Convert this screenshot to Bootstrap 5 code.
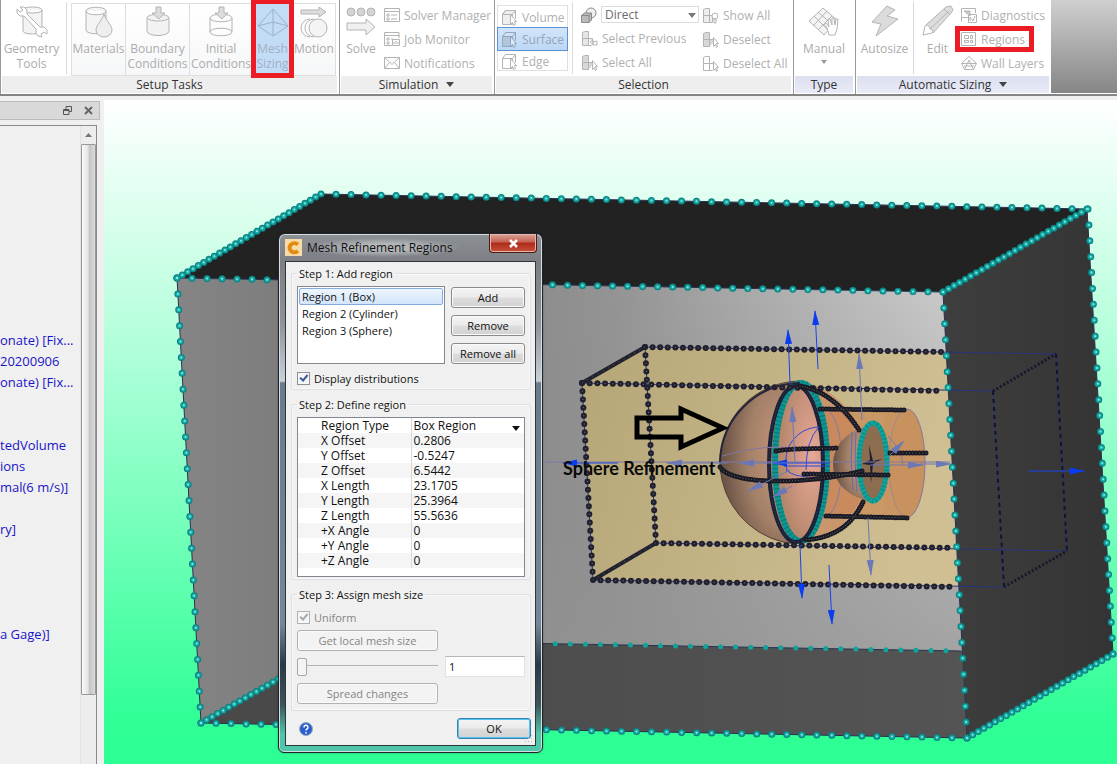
<!DOCTYPE html>
<html lang="en">
<head>
<meta charset="utf-8">
<meta name="viewport" content="width=device-width, initial-scale=1">
<title>Mesh Refinement Regions</title>
<link href="https://cdn.jsdelivr.net/npm/bootstrap@5.3.0/dist/css/bootstrap.min.css" rel="stylesheet">
<style>
  body { font-family: "Open Sans", "Noto Sans", sans-serif; font-size: 12px; line-height: 15px; background: #f0f0f0; color: #222; }
  button, select, input { font: inherit; color: inherit; }
  svg { display: block; flex: none; }
  .ico { fill: none; stroke: #b4b4b4; stroke-width: 1; }

  /* ribbon */
  .ribbon { border-bottom: 2px solid #858585; height: 96px; background: #fff; overflow: hidden; }
  .rgroup { border-left: 1px solid #9a9a9a; border-right: 1px solid #fff; flex: none; }
  .rbody { height: 76px; }
  .rlabel { height: 17px; line-height: 18px; background: #eeeeee; margin: 0 1px 1px; color: #333; }
  .rlabel.active-tab { background: linear-gradient(#dcdff0, #e9ebf7); }
  .rlabel .caret-sm { border: 4px solid transparent; border-top: 5px solid #444; border-bottom: 0; }
  .big { border: 0; background: none; padding: 4px 0 0; color: #acacac; display: flex; flex-direction: column; align-items: center; flex: none; white-space: nowrap; }
  .big svg { margin-bottom: 3px; }
  .tasks { border: 1px solid #dedede; background: linear-gradient(#fff, #f6f7f8); height: 73px; margin: 3px 0 0 4px; }
  .tasks .big { padding-top: 2px; }
  .tasks .big + .big { border-left: 1px solid #dedede; }
  .tasks .chosen { background: #c3dcf6; color: #9fb0c4; overflow: visible; position: relative; }
  .tasks .chosen .ico { stroke: #9db0c6; }
  .redbox { position: absolute; border: 5px solid #ec1c24; pointer-events: none; }
  .redbox.tall { inset: -5px -2px -3px -2px; }
  .redbox.wide { inset: -1px -9px -1px -6px; }
  .rule { width: 1px; background: #dadada; margin: 2px 0; flex: none; }
  .cmds { padding-top: 3px; }
  .cmd { border: 0; background: none; padding: 0; height: 24px; color: #b0b0b0; display: flex; align-items: center; gap: 4px; white-space: nowrap; position: relative; }
  .modes { border: 1px solid #e0e0e0; width: 71px; margin: 5px 0 0 2px; height: 66px; }
  .modes .cmd { height: 22px; width: 100%; padding-left: 3px; gap: 4px; }
  .modes .on { outline: 1px solid #5b94d6; background: linear-gradient(#d2e5f9, #bcd8f5); color: #93a5ba; }
  .pick { width: 99px; height: 17px; border: 1px solid #dcdcdc; background: #fff; color: #6c6c6c; padding: 0 3px; appearance: none; line-height: 15px; }
  .pickwrap { height: 23px; width: 118px; }
  .pickwrap::after, .typewrap::after { content: ""; position: absolute; right: 3px; top: 10px; border: 4px solid transparent; border-top: 5px solid #777; border-bottom: 0; pointer-events: none; }
  .ribbon-rest { background: linear-gradient(#cfcfcf, #868686); margin-bottom: 1px; }

  /* tree */
  .side { width: 104px; padding-top: 5px; }
  .side-head { height: 19px; margin-right: 4px; background: #d9d9d9; border: 1px solid #bcbcbc; border-left: 0; padding-right: 6px; gap: 12px; }
  .tree { margin: 5px 7px 0 0; border-top: 1px solid #8a8a8a; border-right: 1px solid #8a8a8a; }
  .tree ul { font-size: 13px; line-height: 21px; padding-top: 204px; width: 80px; }
  .tree a { color: #1a14c8; text-decoration: none; white-space: nowrap; display: block; height: 21px; }
  .gap-2rows { margin-top: 42px; } .gap-1row { margin-top: 21px; } .gap-4rows { margin-top: 84px; }
  .sbar { width: 16px; background: #ededed; border-left: 1px solid #e2e2e2; }
  .thumb { height: 551px; border: 1px solid #999; border-radius: 1px; background: linear-gradient(90deg, #fafafa, #e4e4e4 45%, #c4c4c8 60%, #dcdcdc); }

  /* scene */
  .scene { background: linear-gradient(#fff, #9cffd0 47%, #30ff96 93%, #2cff94); overflow: hidden; }
  .beads use, .beads path { fill: none; stroke-linecap: round; stroke-dasharray: 0 1; }
  .note { font: bold 18px Lato, "Open Sans", sans-serif; fill: #0a0a0a; }

  /* dialog */
  .dlg { left: 174px; top: 133px; width: 265px; border: 1px solid #20252a; border-radius: 7px 7px 6px 6px; padding: 0 6px 6px; font-size: 11px; line-height: 15px; color: #111;
    background: linear-gradient(#8d9195 0, #7b7f84 28px, #8e9499 90px, #c9d1d9 147px, #6a7b8d 149px, #75869a 390px, #2a3a48 430px, #3a5358 470px, #4fc6a8 500px); box-shadow: inset 0 0 0 1px #d5dde2, 0 0 2px #0006; }
  .dlg-title { height: 27px; font-size: 12px; }
  .dlg-title .glow { background: radial-gradient(closest-side, #b4b7ba 40%, #b4b7ba00); padding: 2px 8px 2px 1px; }
  .xbtn { position: absolute; right: 5px; top: 0; width: 48px; height: 19px; border: 1px solid #4a1a16; border-top: 0; border-radius: 0 0 4px 4px; padding: 0; background: linear-gradient(#dba59c, #c6604f 45%, #ac2b1a 50%, #c9503a); box-shadow: inset 0 0 0 1px #e9b5ac; }
  .client { background: #f0f0f0; border: 1px solid #2f363c; padding: 4px 4px 6px 5px; position: relative; }
  .client fieldset { border: 1px solid #dcdfe2; border-radius: 3px; padding: 0 5px; min-width: 0; box-shadow: inset 0 0 0 1px #f9f9f9; margin-bottom: 7px; }
  .client legend { float: none; width: auto; font-size: 11px; line-height: 15px; padding: 0 2px; margin: 0 0 5px; }
  .regions { width: 148px; height: 78px; border: 1px solid #828790; background: #fff; padding: 1px; }
  .regions .list-group-item { border: 1px solid transparent; padding: 0 2px; height: 17px; line-height: 15px; background: none; color: #111; border-radius: 2px; text-align: left; }
  .regions .picked { border-color: #84acdd; background: linear-gradient(#eef5fd, #d3e5fb); }
  .acts { width: 74px; gap: 7px; padding-top: 1px; }
  .wbtn { border: 1px solid #8a8a8a; border-radius: 3px; padding: 0; height: 21px; line-height: 17px; background: linear-gradient(#f4f4f4, #ebebeb 48%, #dddddd 52%, #d2d2d2); box-shadow: inset 0 0 0 1px #fafafa; color: #111; }
  .wbtn:disabled { background: #f3f3f3; border-color: #b0b3b5; color: #858585; }
  .wbtn.ok { border-color: #3c7fb1; box-shadow: inset 0 0 0 1px #54c5ee; width: 74px; }
  .wbtn.wide { width: 141px; display: block; }
  .tick { appearance: none; width: 13px; height: 13px; border: 1px solid #8e8f8f; margin: 0; background: #f4f6f8; flex: none; display: grid; place-items: center; }
  .tick::before { content: ""; width: 8px; height: 5px; border: solid #3c5a94; border-width: 0 0 2px 2px; transform: rotate(-50deg) translate(1px, -1px); }
  .tick:disabled { border-color: #b1b1b1; } .tick:disabled::before { border-color: #aaa; }
  .props { border: 1px solid #828790; background: #fff; height: 160px; }
  .props table { width: 100%; font-size: 12px; border-collapse: collapse; table-layout: fixed; }
  .props tr { height: 15px; } .props tr:nth-child(even) { background: #f5f5f5; }
  .props th { font-weight: 400; width: 113px; padding: 0 0 0 23px; border-right: 1px solid #d8d8d8; }
  .props td { padding: 0 0 0 2px; }
  .props select { appearance: none; border: 0; background: none; padding: 0; width: 100%; height: 15px; display: block; line-height: 15px; }
  .typewrap::after { top: 8px; right: 4px; border-top-color: #111; }
  .slide { appearance: none; width: 141px; height: 19px; background: linear-gradient(#b4b4b4, #b4b4b4) 0 8px / 100% 1px no-repeat; margin: 0; }
  .slide::-webkit-slider-thumb { appearance: none; width: 10px; height: 18px; border: 1px solid #a4a6a8; border-radius: 2px; background: #f4f4f4; }
  .num { width: 80px; height: 21px; border: 1px solid #e0e3e6; border-top-color: #b5b8bb; background: #fff; padding: 0 3px; }
  .help { border: 0; background: none; padding: 0; }
  .grip { position: absolute; right: 1px; bottom: 1px; }
</style>
</head>
<body class="d-flex flex-column min-vh-100 overflow-hidden">

<header class="ribbon d-flex">
  <section class="rgroup" style="width:339px">
    <div class="rbody d-flex">
      <button class="big" style="width:61px">
        <svg class="ico" width="32" height="34" viewBox="0 0 32 34"><path fill="#f4f4f4" d="M7 6v21c0 4 19 4 19 0V6M7 6c0-4 19-4 19 0s-19 4-19 0"/><path fill="#fff" d="M4 3l4 0 3 3v4l13 13 4 0 3 3v4l-3-2-3 2 1 3-4-1-2-3 0-4L8 12 4 12 1 9V5l3 3 3-2z"/></svg>
        Geometry<br>Tools</button>
      <div class="rule ms-1"></div>
      <div class="tasks d-flex">
        <button class="big" style="width:53px">
          <svg class="ico" width="32" height="32" viewBox="0 0 32 32"><path fill="#f4f4f4" d="M3 5v19c0 5 20 5 20 0V5M3 5c0-5 20-5 20 0s-20 5-20 0"/><path fill="#eee" d="M21 8c2 7 8 11 8 16a8 7 0 0 1-16 0c0-5 6-9 8-16z"/></svg>Materials</button>
        <button class="big" style="width:64px">
          <svg class="ico" width="32" height="32" viewBox="0 0 32 32"><path fill="#f2f2f2" d="M5 12v13c0 6 22 6 22 0V12c0-5-22-5-22 0 3 4 19 4 22 0"/><path fill="#ddd" d="M14 1h5v6h4l-6 6-7-6h4z"/></svg>Boundary<br>Conditions</button>
        <button class="big" style="width:63px">
          <svg class="ico" width="32" height="32" viewBox="0 0 32 32"><path d="M5 12v14c0 5 22 5 22 0V12M5 12c0-5 22-5 22 0s-22 5-22 0M5 26c0-5 22-5 22 0"/><path fill="#ddd" d="M14 1h5v6h4l-6 6-7-6h4z"/></svg>Initial<br>Conditions</button>
        <button class="big chosen" style="width:40px">
          <svg class="ico" width="32" height="32" viewBox="0 0 32 32"><path d="M16 3L1 20l15 10 15-10zM16 3v27M1 20l15-4 15 4"/></svg>Mesh<br>Sizing<span class="redbox tall"></span></button>
        <button class="big" style="width:43px">
          <svg class="ico" width="32" height="32" viewBox="0 0 32 32"><path fill="#ddd" d="M3 4h18V1l7 5-7 5V8H3z"/><path d="M12 13a9 9 0 0 0 0 18M16 13a9 9 0 0 0 0 18"/><circle cx="20" cy="22" r="9" fill="#f4f4f4"/></svg>Motion</button>
      </div>
    </div>
    <div class="rlabel text-center">Setup Tasks</div>
  </section>

  <section class="rgroup" style="width:155px">
    <div class="rbody d-flex">
      <button class="big" style="width:42px">
        <svg class="ico" width="32" height="34" viewBox="0 0 32 34"><g fill="#d4d4d4"><circle cx="6" cy="8" r="4"/><circle cx="16" cy="8" r="4"/><circle cx="26" cy="8" r="4"/></g><path fill="#f0f0f0" d="M2 19h19v-4l9 8-9 8v-5H2z"/></svg>Solve</button>
      <div class="cmds" style="padding-left:2px">
        <button class="cmd"><svg class="ico" width="16" height="16"><path d="M.5 1.500h15v13H.5zM.5 4.500h15M3 7h2v2H3zM3 11h2v2H3zM7 8h6M7 12h6"/></svg>Solver Manager</button>
        <button class="cmd"><svg class="ico" width="16" height="16"><path d="M15 7V1.500H.5v13H8M.5 4.500h15M3 7h2v2H3zM3 11h2v2H3zM7 8h2M8.500 8.500h7v6h-7zM10 13v-2M12 13v-3M14 13v-2"/></svg>Job Monitor</button>
        <button class="cmd"><svg class="ico" width="16" height="16"><path d="M.5 2.500h15v11H.5zl7.500 7 7.500-7M.5 13.500l5-6M15.500 13.500l-5-6"/></svg>Notifications</button>
      </div>
    </div>
    <div class="rlabel d-flex justify-content-center align-items-center gap-2">Simulation <span class="caret-sm"></span></div>
  </section>

  <section class="rgroup" style="width:299px">
    <div class="rbody d-flex">
      <div class="modes">
        <button class="cmd"><svg class="ico" width="17" height="17"><path fill="#eee" d="M1.500 5.500h10v10h-10zl3-4h10l-3 4M14.500 1.500v8M1.500 5.500l3-4"/><path fill="#fff" d="M9.500 5.500v10l2-2 1 3 2-1-1-3h2z"/></svg>Volume</button>
        <button class="cmd on"><svg class="ico" width="17" height="17" style="stroke:#8fa6c0"><path fill="#b5c5d8" d="M1.500 5.500h10v10h-10z"/><path d="M1.500 5.500l3-4h10l-3 4M14.500 1.500v8"/><path fill="#dbe9f8" d="M9.500 5.500v10l2-2 1 3 2-1-1-3h2z"/></svg>Surface</button>
        <button class="cmd"><svg class="ico" width="17" height="17"><path d="M1.500 5.500h10v10h-10zl3-4h10l-3 4M14.500 1.500v8"/><path fill="#fff" d="M9.500 5.500v10l2-2 1 3 2-1-1-3h2z"/></svg>Edge</button>
      </div>
      <div class="rule ms-1"></div>
      <div class="ps-2 cmds" style="width:125px">
        <div class="d-flex pickwrap position-relative align-items-center gap-1"><svg class="ico" width="16" height="16" style="stroke:#8a8a8a"><circle cx="10" cy="6" r="5" fill="#eee"/><path fill="#bbb" d="M.5 8.500l3-2.500h7v7l-2.500 2.500H.5z"/><path d="M.5 8.500H8v7M8 8.500L10.500 6"/></svg>
          <select class="pick flex-fill" aria-label="Selection mode"><option>Direct</option></select></div>
        <button class="cmd"><svg class="ico" width="17" height="17"><path fill="#e6e6e6" d="M1.500 15.500v-13l2-1h4v14zM1.500 8.500h6M7.500 8.500h4v3M7.500 15.500h3"/><path d="M9 12l3-2v5zM12 12l4-1v4h-4z"/></svg>Select Previous</button>
        <button class="cmd"><svg class="ico" width="17" height="17"><path fill="#d8d8d8" d="M1.500 15.500v-13l2-1h4v14zM1.500 8.500h6M7.500 15.500v-7h4v3"/><path fill="#fff" d="M11.500 6.500v9l2-2 1 3 1-1-1-3h2z"/></svg>Select All</button>
      </div>
      <div class="ps-1 cmds">
        <button class="cmd"><svg class="ico" width="17" height="17"><path fill="#eee" d="M1.500 15.500v-13l2-1h4v14zM1.500 8.500h6M7.500 15.500h3v-7h-3"/><circle cx="13" cy="9" r="3" fill="#fff"/><path fill="#fff" d="M12 12h2v4h-2z"/></svg>Show All</button>
        <button class="cmd"><svg class="ico" width="17" height="17"><path fill="#d8d8d8" d="M1.500 15.500v-13l2-1h4v14zM1.500 8.500h6M7.500 15.500v-7h4v3"/><path fill="#fff" d="M11.500 6.500v9l2-2 1 3 1-1-1-3h2z"/></svg>Deselect</button>
        <button class="cmd"><svg class="ico" width="17" height="17"><path d="M1.500 15.500v-13l2-1h4v14zM1.500 8.500h6M7.500 15.500h3M7.500 8.500h4v3"/><path fill="#fff" d="M11.500 6.500v9l2-2 1 3 1-1-1-3h2z"/></svg>Deselect All</button>
      </div>
    </div>
    <div class="rlabel text-center">Selection</div>
  </section>

  <section class="rgroup" style="width:62px">
    <div class="rbody d-flex">
      <button class="big" style="width:60px">
        <svg class="ico" width="34" height="34" viewBox="0 0 34 34"><path fill="#f4f4f4" d="M2 17L16 4l14 12-13 15zM7 12l14 14M6 22L20 7"/><path d="M11 8l15 13M11 26L25 12"/><path fill="#fff" d="M20 24l-3-4 2-1 3 4-1-8h2l2 6v-7h2l1 7 1-6h2l-1 10-2 6h-6z"/></svg>Manual<span class="mt-1" style="border:3px solid transparent;border-top:4px solid #999;border-bottom:0"></span></button>
    </div>
    <div class="rlabel active-tab text-center">Type</div>
  </section>

  <section class="rgroup" style="width:196px">
    <div class="rbody d-flex">
      <button class="big" style="width:57px">
        <svg class="ico" width="32" height="34" viewBox="0 0 32 34"><path fill="#dcdcdc" d="M18 2L3 18l9 2-5 12 22-17-11-3 8-6z"/></svg>Autosize</button>
      <div class="rule"></div>
      <button class="big" style="width:47px">
        <svg class="ico" width="32" height="34" viewBox="0 0 32 34"><path fill="#fff" d="M1 31l2-9 4-4 7 7-4 4z"/><path fill="#ddd" d="M4 21L24 3l5-1 2 4-2 3L11 29c0-3-1-4-3-4 0-3-2-4-4-4zM8 25L27 7M22 5l6 6"/></svg>Edit</button>
      <div class="cmds">
        <button class="cmd"><svg class="ico" width="16" height="16"><path d="M.5 14.500v-13h14V6M.5 10.500h7M7.500 7.500h8v8h-8zM9 14v-4l3 4 2-5"/><path fill="#ccc" d="M3 4h6v5z"/></svg>Diagnostics</button>
        <button class="cmd"><svg class="ico" width="16" height="16"><path d="M.5 1.500h14v13H.5zM3.500 4.500h4v3h-4zM9.500 4.500h2v3h-2zM3.500 9.500h4v2h-4zM9.500 9.500h2v2h-2z"/></svg>Regions<span class="redbox wide"></span></button>
        <button class="cmd"><svg class="ico" width="16" height="16"><path d="M8 1.500L.5 8.500l3 6h9l3-6zM8 5l-4.500 9.500M8 5l4.500 9.500M.5 8.500h15M3 11h10"/></svg>Wall Layers</button>
      </div>
    </div>
    <div class="rlabel active-tab d-flex justify-content-center align-items-center gap-2">Automatic Sizing <span class="caret-sm"></span></div>
  </section>
  <div class="ribbon-rest flex-fill"></div>
</header>

<main class="d-flex flex-fill">
  <aside class="side d-flex flex-column flex-shrink-0">
    <div class="side-head d-flex justify-content-end align-items-center">
      <svg width="9" height="9" fill="none" stroke="#555"><path d="M3 3V.5h5.500v5H6M.5 3.500H6v5H.5zM.5 4.500H6"/></svg>
      <svg width="9" height="9" stroke="#666" stroke-width="2"><path d="M1 1l7 7M8 1L1 8"/></svg>
    </div>
    <div class="tree d-flex flex-fill">
      <ul class="list-unstyled m-0">
        <li><a href="#">onate) [Fix...</a></li>
        <li><a href="#">20200906</a></li>
        <li><a href="#">onate) [Fix...</a></li>
        <li class="gap-2rows"><a href="#">tedVolume</a></li>
        <li><a href="#">ions</a></li>
        <li><a href="#">mal(6 m/s)]</a></li>
        <li class="gap-1row"><a href="#">ry]</a></li>
        <li class="gap-4rows"><a href="#">a Gage)]</a></li>
      </ul>
      <div class="sbar">
        <svg width="15" height="18"><path d="M4 11l3.500-4 3.500 4z" fill="#777"/></svg>
        <div class="thumb"></div>
      </div>
    </div>
  </aside>

  <section class="scene flex-fill position-relative mt-1">
    <svg class="w-100 h-100 position-absolute" viewBox="104 100 1013 664" preserveAspectRatio="xMinYMin slice" role="img" aria-label="Mesh model">
      <defs>
        <linearGradient id="wall"><stop offset="0" stop-color="#7c7c7c"/><stop offset=".45" stop-color="#949494"/><stop offset="1" stop-color="#cdcdcd"/></linearGradient>
        <linearGradient id="shade" x2="0" y2="1"><stop offset="0" stop-color="#888" stop-opacity="0"/><stop offset="1" stop-color="#929292" stop-opacity=".7"/></linearGradient>
        <linearGradient id="floor"><stop offset="0" stop-color="#484848"/><stop offset="1" stop-color="#545454"/></linearGradient>
        <linearGradient id="tan" x2="1" y2=".2"><stop offset="0" stop-color="#b5a678"/><stop offset="1" stop-color="#cfbf92"/></linearGradient>
        <linearGradient id="lwall"><stop offset="0" stop-color="#858585"/><stop offset="1" stop-color="#787878"/></linearGradient>
        <linearGradient id="rwall"><stop offset="0" stop-color="#3e3e3e"/><stop offset="1" stop-color="#343434"/></linearGradient>
        <radialGradient id="ball" cx=".8" cy=".45" r=".75"><stop offset="0" stop-color="#c99a7e"/><stop offset=".6" stop-color="#a38068"/><stop offset="1" stop-color="#6e5648"/></radialGradient>
        <radialGradient id="inner" cx=".75" cy=".45" r=".6"><stop offset="0" stop-color="#e8a898"/><stop offset="1" stop-color="#b4866a"/></radialGradient>
        <marker id="tip" markerWidth="16" markerHeight="8" refX="14" refY="3.500" orient="auto" markerUnits="userSpaceOnUse"><path d="M0 0L15 3.500 0 7z" fill="#0a3cf0"/></marker>
        <marker id="tipDim" markerWidth="18" markerHeight="8" refX="15" refY="3.500" orient="auto" markerUnits="userSpaceOnUse"><path d="M0 0L16 3.500 0 7z" fill="#6a78b8"/></marker>
        <g id="outer">
          <path pathLength="51" d="M321 194L1087 209"/><path pathLength="51" d="M177 278L943 292"/><path pathLength="28" d="M177 278L201 723"/>
          <path pathLength="27" d="M177 278L321 194"/><path pathLength="26" d="M943 292L1087 209"/><path pathLength="28" d="M943 292L967 738"/>
          <path pathLength="28" d="M1088 209L1113 654"/><path pathLength="51" d="M201 723L967 738"/><path pathLength="26" d="M967 738L1113 654"/>
          <path pathLength="26" d="M201 723L345 641"/>
        </g>
        <path id="floorEdge" pathLength="41" d="M345 640L961 651"/>
        <g id="region">
          <path pathLength="39" d="M645 347L941 352"/><path pathLength="47" d="M582 383L944 391"/><path pathLength="39" d="M656 543L955 548"/><path pathLength="48" d="M593 580L957 587"/>
          <path pathLength="24" d="M582 383L593 580"/><path pathLength="24" d="M645 347L656 543"/>
        </g>
        <g id="cyl">
          <path pathLength="28" d="M820 409L904 410"/><path pathLength="18" d="M776 451C795 448 815 449 836 448"/><path pathLength="11" d="M890 453L926 453"/><path pathLength="26" d="M804 474L888 475"/><path pathLength="28" d="M826 516L910 518"/>
          <path pathLength="30" d="M800 386Q834 392 859 430"/><path pathLength="30" d="M863 502Q846 538 804 540"/>
          <path pathLength="50" d="M720 467C730 484 800 486 862 471"/>
        </g>
      </defs>
      <path fill="#222" d="M177 278L321 194 1087 209 943 292z"/>
      <path fill="url(#wall)" d="M330 281L943 292 962 651 345 640z"/>
      <path fill="url(#shade)" d="M330 281L943 292 962 651 345 640z"/>
      <path fill="url(#lwall)" d="M177 278L330 281 345 641 201 723z"/>
      <path fill="url(#floor)" d="M345 640L962 651 967 738 201 723z"/>
      <path fill="url(#rwall)" d="M943 292L1087 209 1113 654 967 738z"/>
      <path fill="url(#tan)" d="M582 383L645 347 946 352 958 587 593 580z"/>
      <path fill="none" stroke="#28347c" d="M645 347L1056 354M582 383L993 391M656 543L1067 551M593 580L1004 587M582 383L593 580M645 347L656 543M993 391L1004 587M1056 354L1067 551"/>
      <path fill="none" stroke="#12152a" stroke-width="2" stroke-dasharray="4 4" d="M993 391L1004 587M1056 354L1067 551"/>
      <path fill="none" stroke="#15182c" stroke-width="3" stroke-dasharray="2 2" d="M993 391L1056 354M1004 587L1067 551"/>
      <path fill="none" stroke="#2a3050" d="M177 278L943 292 1087 209 321 194zL201 723 967 738 1113 654 1087 209M943 292L967 738M201 723L345 640 961 651"/>

      <!-- cylinder and spheres -->
      <path fill="#c8864f" fill-opacity=".65" d="M820 409H907a18 54 0 0 1 0 109L826 517z"/>
      <path fill="#c98058" fill-opacity=".6" d="M800 381A82 82 0 0 1 858 425 50 50 0 0 0 860 500Q840 540 796 544z"/>
      <ellipse cx="824" cy="463" rx="18" ry="54" fill="none" stroke="#8478a8"/>
      <ellipse cx="907" cy="463" rx="18" ry="54" fill="#c8925f" stroke="#8478a8"/>
      <path fill="#c8925f" d="M884 411h23v106h-23z" opacity=".5"/>
      <path fill="url(#ball)" stroke="#54402f" d="M800 381A81 81 0 0 0 722 480 82 82 0 0 0 796 544C760 510 764 410 800 381z"/>
      <ellipse cx="798" cy="463" rx="27" ry="80" fill="url(#inner)"/>
      <ellipse cx="801" cy="462" rx="26" ry="79" fill="none" stroke="#0e9590" stroke-width="6"/>
      <ellipse cx="801" cy="462" rx="26" ry="79" fill="none" stroke="#0a7578" stroke-width="6" stroke-dasharray="1 3"/>
      <ellipse cx="796" cy="464" rx="27" ry="78" fill="none" stroke="#1a2038" stroke-width="4"/>
      <ellipse cx="796" cy="464" rx="27" ry="78" fill="none" stroke="#3d4460" stroke-dasharray="1 2"/>
      <path fill="url(#ball)" d="M873 425C850 428 833 444 833 464S850 498 873 502z"/>
      <ellipse cx="873" cy="462" rx="14" ry="39" fill="#8c6d50" stroke="#0fa39b" stroke-width="5"/>
      <ellipse cx="873" cy="462" rx="14" ry="39" fill="none" stroke="#0c8583" stroke-dasharray="1 3" stroke-width="5"/>
      <path d="M869 445l1 15-8 4 8 1 1 18 2-19 9-5-9 2z" fill="#1c2034"/>
      <path fill="none" stroke="#2f48d8" d="M819 427A34 34 0 0 0 787 470M819 427Q806 440 806 470M784 466H830M786 470Q796 478 810 476"/>
      <path fill="none" stroke="#6a68b0" d="M852 432Q850 460 853 490M856 432Q854 460 857 492"/>
      <path fill="none" stroke="#8076a4" d="M722 456Q770 442 800 450M888 436Q902 450 903 465M545 462H950"/>

      <g class="beads">
        <use href="#region" stroke="#202030" stroke-width="6"/><use href="#region" stroke="#8f8a78" stroke-width="1"/>
        <use href="#cyl" stroke="#191925" stroke-width="5"/><use href="#cyl" stroke="#77756c" stroke-width="1"/>
      </g>
      <path d="M582 383L645 347M593 580L656 543" stroke="#20222e" stroke-width="4" stroke-linecap="round"/>
      <path d="M582 383L645 347M593 580L656 543" stroke="#55576a" stroke-dasharray="1 5"/>
      <path fill="none" stroke="#24243a" stroke-width="2" d="M800 383A81 81 0 0 0 720 462"/>

      <g class="beads">
        <use href="#floorEdge" stroke="#12a49c" stroke-width="5"/>
        <use href="#outer" stroke="#0b7f7f" stroke-width="7"/><use href="#outer" stroke="#18aaa6" stroke-width="5"/><use href="#outer" stroke="#7ff0e4" stroke-width="2"/>
      </g>

      <g fill="none" stroke="#1a44e8" marker-end="url(#tip)"><path d="M818 369L815 311"/><path d="M829 565L832 624"/><path d="M790 384L788 330"/><path d="M800 545L802 598"/><path d="M1028 471H1084"/><path d="M618 463H563"/><path d="M830 463H773"/></g>
      <g fill="none" stroke="#6a78b8" marker-end="url(#tipDim)"><path d="M862 420L859 354"/><path d="M868 518L871 575"/><path d="M728 463H667"/><path d="M795 463H739"/><path d="M795 463L792 407"/><path d="M870 465H923"/><path d="M920 464H951"/><path d="M890 455L904 441"/><path d="M790 470L748 491"/><path d="M792 486L773 497"/></g>

      <path fill="none" stroke="#000" stroke-width="5" d="M637 418H681V409L723 428 681 447V437H637z"/>
      <text class="note" x="563" y="475">Sphere Refinement</text>
    </svg>

    <div class="dlg position-absolute" role="dialog" aria-label="Mesh Refinement Regions">
      <div class="dlg-title d-flex align-items-center gap-1">
        <svg width="17" height="17"><path fill="#f7dca8" d="M0 0h17v17H0z"/><path d="M13 5.500A5 4.500 0 1 0 13 12" fill="none" stroke="#e58a10" stroke-width="4"/></svg>
        <span class="glow">Mesh Refinement Regions</span>
        <button class="xbtn" aria-label="Close"><svg class="m-auto" width="11" height="9"><path d="M2 1l7 7M9 1L2 8" stroke="#fff" stroke-width="2.500"/></svg></button>
      </div>
      <div class="client">
        <fieldset style="height:124px"><legend>Step 1: Add region</legend>
          <div class="d-flex justify-content-between">
            <div class="regions list-group rounded-0">
              <button class="list-group-item picked">Region 1 (Box)</button><button class="list-group-item">Region 2 (Cylinder)</button><button class="list-group-item">Region 3 (Sphere)</button>
            </div>
            <div class="acts d-flex flex-column"><button class="wbtn">Add</button><button class="wbtn">Remove</button><button class="wbtn">Remove all</button></div>
          </div>
          <label class="d-flex align-items-center gap-1" style="margin-top:7px"><input class="tick" type="checkbox" checked>Display distributions</label>
        </fieldset>
        <fieldset style="height:183px"><legend>Step 2: Define region</legend>
          <div class="props"><table>
            <tr><th scope="row">Region Type</th><td><div class="typewrap position-relative"><select aria-label="Region Type"><option>Box Region</option></select></div></td></tr>
            <tr><th scope="row">X Offset</th><td>0.2806</td></tr><tr><th scope="row">Y Offset</th><td>-0.5247</td></tr><tr><th scope="row">Z Offset</th><td>6.5442</td></tr>
            <tr><th scope="row">X Length</th><td>23.1705</td></tr><tr><th scope="row">Y Length</th><td>25.3964</td></tr><tr><th scope="row">Z Length</th><td>55.5636</td></tr>
            <tr><th scope="row">+X Angle</th><td>0</td></tr><tr><th scope="row">+Y Angle</th><td>0</td></tr><tr><th scope="row">+Z Angle</th><td>0</td></tr>
          </table></div>
        </fieldset>
        <fieldset style="height:124px"><legend>Step 3: Assign mesh size</legend>
          <label class="d-flex align-items-center gap-1 pt-1" style="color:#858585;height:17px"><input class="tick" type="checkbox" checked disabled>Uniform</label>
          <button class="wbtn wide" style="margin-top:6px" disabled>Get local mesh size</button>
          <div class="d-flex justify-content-between align-items-center" style="margin:5px 0 6px"><input class="slide" type="range" value="0" disabled aria-label="Mesh size"><input class="num" value="1" aria-label="Mesh size value"></div>
          <button class="wbtn wide" disabled>Spread changes</button>
        </fieldset>
        <div class="d-flex justify-content-between align-items-center ps-2">
          <button class="help" aria-label="Help"><svg width="14" height="14"><circle cx="7" cy="7" r="6.500" fill="#2b5fd0" stroke="#9ab"/><path d="M5 5.500a2 2 0 1 1 3 1.500q-1 .5-1 1.500M7 10v1.500" fill="none" stroke="#fff" stroke-width="1.500"/></svg></button>
          <button class="wbtn ok">OK</button>
        </div>
        <svg class="grip" width="10" height="10" fill="#b8b8b8"><path d="M7 1h1v1H7zM4 4h1v1H4zM7 4h1v1H7zM1 7h1v1H1zM4 7h1v1H4zM7 7h1v1H7z"/></svg>
      </div>
    </div>
  </section>
</main>
<script src="https://cdn.jsdelivr.net/npm/bootstrap@5.3.0/dist/js/bootstrap.bundle.min.js"></script>
</body>
</html>
